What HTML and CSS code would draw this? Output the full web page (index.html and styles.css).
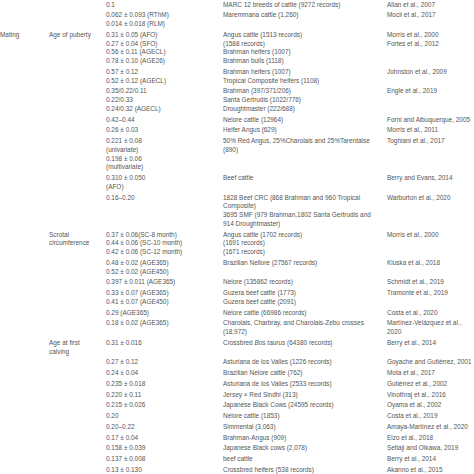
FILE: index.html
```html
<!DOCTYPE html>
<html lang="en">
<head>
<meta charset="utf-8">
<title>Heritability estimates</title>
<link rel="stylesheet" href="styles.css">
</head>
<body>
<table class="data-table">
  <colgroup>
    <col class="c-trait">
    <col class="c-sub">
    <col class="c-est">
    <col class="c-pop">
    <col class="c-ref">
  </colgroup>
  <tbody>
    <tr><td></td><td></td><td>0.1</td><td>MARC 12 breeds of cattle (9272 records)</td><td>Allan et al., 2007</td></tr>
    <tr><td></td><td></td><td>0.062 ± 0.093 (RThM)<br>0.014 ± 0.018 (RLM)</td><td>Maremmana cattle (1,260)</td><td>Mocii et al., 2017</td></tr>
    <tr><td>Mating</td><td>Age of puberty</td><td>0.31 ± 0.05 (AFO)<br>0.27 ± 0.04 (SFO)<br>0.56 ± 0.11 (AGECL)<br>0.78 ± 0.10 (AGE26)</td><td>Angus cattle (1513 records)<br>(1588 records)<br>Brahman heifers (1007)<br>Brahman bulls (1118)</td><td>Morris et al., 2000<br>Fortes et al., 2012</td></tr>
    <tr><td></td><td></td><td>0.57 ± 0.12<br>0.52 ± 0.12 (AGECL)</td><td>Brahman heifers (1007)<br>Tropical Composite heifers (1108)</td><td>Johnston et al., 2009</td></tr>
    <tr><td></td><td></td><td>0.35/0.22/0.11<br>0.22/0.33<br>0.24/0.32 (AGECL)</td><td>Brahman (397/371/206)<br>Santa Gertrudis (1022/776)<br>Droughtmaster (222/688)</td><td>Engle et al., 2019</td></tr>
    <tr><td></td><td></td><td>0.42–0.44</td><td>Nelore cattle (12964)</td><td>Forni and Albuquerque, 2005</td></tr>
    <tr><td></td><td></td><td>0.26 ± 0.03</td><td>Heifer Angus (629)</td><td>Morris et al., 2011</td></tr>
    <tr><td></td><td></td><td>0.221 ± 0.08<br>(univariate)<br>0.198 ± 0.06<br>(multivariate)</td><td>50% Red Angus, 25%Charolais and 25%Tarentaise<br>(890)</td><td>Toghiani et al., 2017</td></tr>
    <tr><td></td><td></td><td>0.310 ± 0.050<br>(AFO)</td><td>Beef cattle</td><td>Berry and Evans, 2014</td></tr>
    <tr><td></td><td></td><td>0.16–0.20</td><td>1828 Beef CRC (868 Brahman and 960 Tropical<br>Composite)<br>3695 SMF (979 Brahman,1802 Santa Gertrudis and<br>914 Droughtmaster)</td><td>Warburton et al., 2020</td></tr>
    <tr><td></td><td>Scrotal<br>circumference</td><td>0.37 ± 0.06(SC-8 month)<br>0.44 ± 0.06 (SC-10 month)<br>0.42 ± 0.06 (SC-12 month)</td><td>Angus cattle (1702 records)<br>(1691 records)<br>(1671 records)</td><td>Morris et al., 2000</td></tr>
    <tr><td></td><td></td><td>0.48 ± 0.02 (AGE365)<br>0.52 ± 0.02 (AGE450)</td><td>Brazilian Nellore (27567 records)</td><td>Kluska et al., 2018</td></tr>
    <tr><td></td><td></td><td>0.397 ± 0.011 (AGE365)</td><td>Nelore (135862 records)</td><td>Schmidt et al., 2019</td></tr>
    <tr><td></td><td></td><td>0.33 ± 0.07 (AGE365)<br>0.41 ± 0.07 (AGE450)</td><td>Guzera beef cattle (1773)<br>Guzera beef cattle (2091)</td><td>Tramonte et al., 2019</td></tr>
    <tr><td></td><td></td><td>0.29 (AGE365)</td><td>Nelore cattle (66986 records)</td><td>Costa et al., 2020</td></tr>
    <tr><td></td><td></td><td>0.18 ± 0.02 (AGE365)</td><td>Charolais, Charbray, and Charolais-Zebu crosses<br>(18,972)</td><td>Martínez-Velázquez et al.,<br>2020</td></tr>
    <tr><td></td><td>Age at first<br>calving</td><td>0.31 ± 0.016</td><td>Crossbred <i>Bos taurus</i> (64380 records)</td><td>Berry et al., 2014</td></tr>
    <tr><td></td><td></td><td>0.27 ± 0.12</td><td>Asturiana de los Valles (1226 records)</td><td>Goyache and Gutiérrez, 2001</td></tr>
    <tr><td></td><td></td><td>0.24 ± 0.04</td><td>Brazilian Nelore cattle (762)</td><td>Mota et al., 2017</td></tr>
    <tr><td></td><td></td><td>0.235 ± 0.018</td><td>Asturiana de los Valles (2533 records)</td><td>Gutiérrez et al., 2002</td></tr>
    <tr><td></td><td></td><td>0.220 ± 0.11</td><td>Jersey × Red Sindhi (313)</td><td>Vinothraj et al., 2016</td></tr>
    <tr><td></td><td></td><td>0.215 ± 0.026</td><td>Japanese Black Cows (24595 records)</td><td>Oyama et al., 2002</td></tr>
    <tr><td></td><td></td><td>0.20</td><td>Nelore cattle (1853)</td><td>Costa et al., 2019</td></tr>
    <tr><td></td><td></td><td>0.20–0.22</td><td>Simmental (3,063)</td><td>Amaya-Martínez et al., 2020</td></tr>
    <tr><td></td><td></td><td>0.17 ± 0.04</td><td>Brahman-Angus (909)</td><td>Elzo et al., 2018</td></tr>
    <tr><td></td><td></td><td>0.158 ± 0.039</td><td>Japanese Black cows (2,078)</td><td>Setiaji and Oikawa, 2019</td></tr>
    <tr><td></td><td></td><td>0.137 ± 0.008</td><td>beef cattle</td><td>Berry et al., 2014</td></tr>
    <tr><td></td><td></td><td>0.13 ± 0.130</td><td>Crossbred heifers (538 records)</td><td>Akanno et al., 2015</td></tr>
  </tbody>
</table>
</body>
</html>
```

FILE: styles.css
```css
html, body {
  margin: 0;
  padding: 0;
  background: #ffffff;
}

body {
  font-family: "Liberation Sans", Arial, sans-serif;
  font-size: 6.45px;
  color: #555555;
  overflow: hidden;
}

.data-table {
  border-collapse: collapse;
  table-layout: fixed;
  width: 474px;
  margin-top: -0.5px;
}

.data-table td {
  padding: 1px 0;
  line-height: 8.75px;
  vertical-align: top;
  white-space: nowrap;
  overflow: visible;
}

.c-trait { width: 49px; }
.c-sub { width: 57px; }
.c-est { width: 117px; }
.c-pop { width: 164px; }
.c-ref { width: 87px; }
```
